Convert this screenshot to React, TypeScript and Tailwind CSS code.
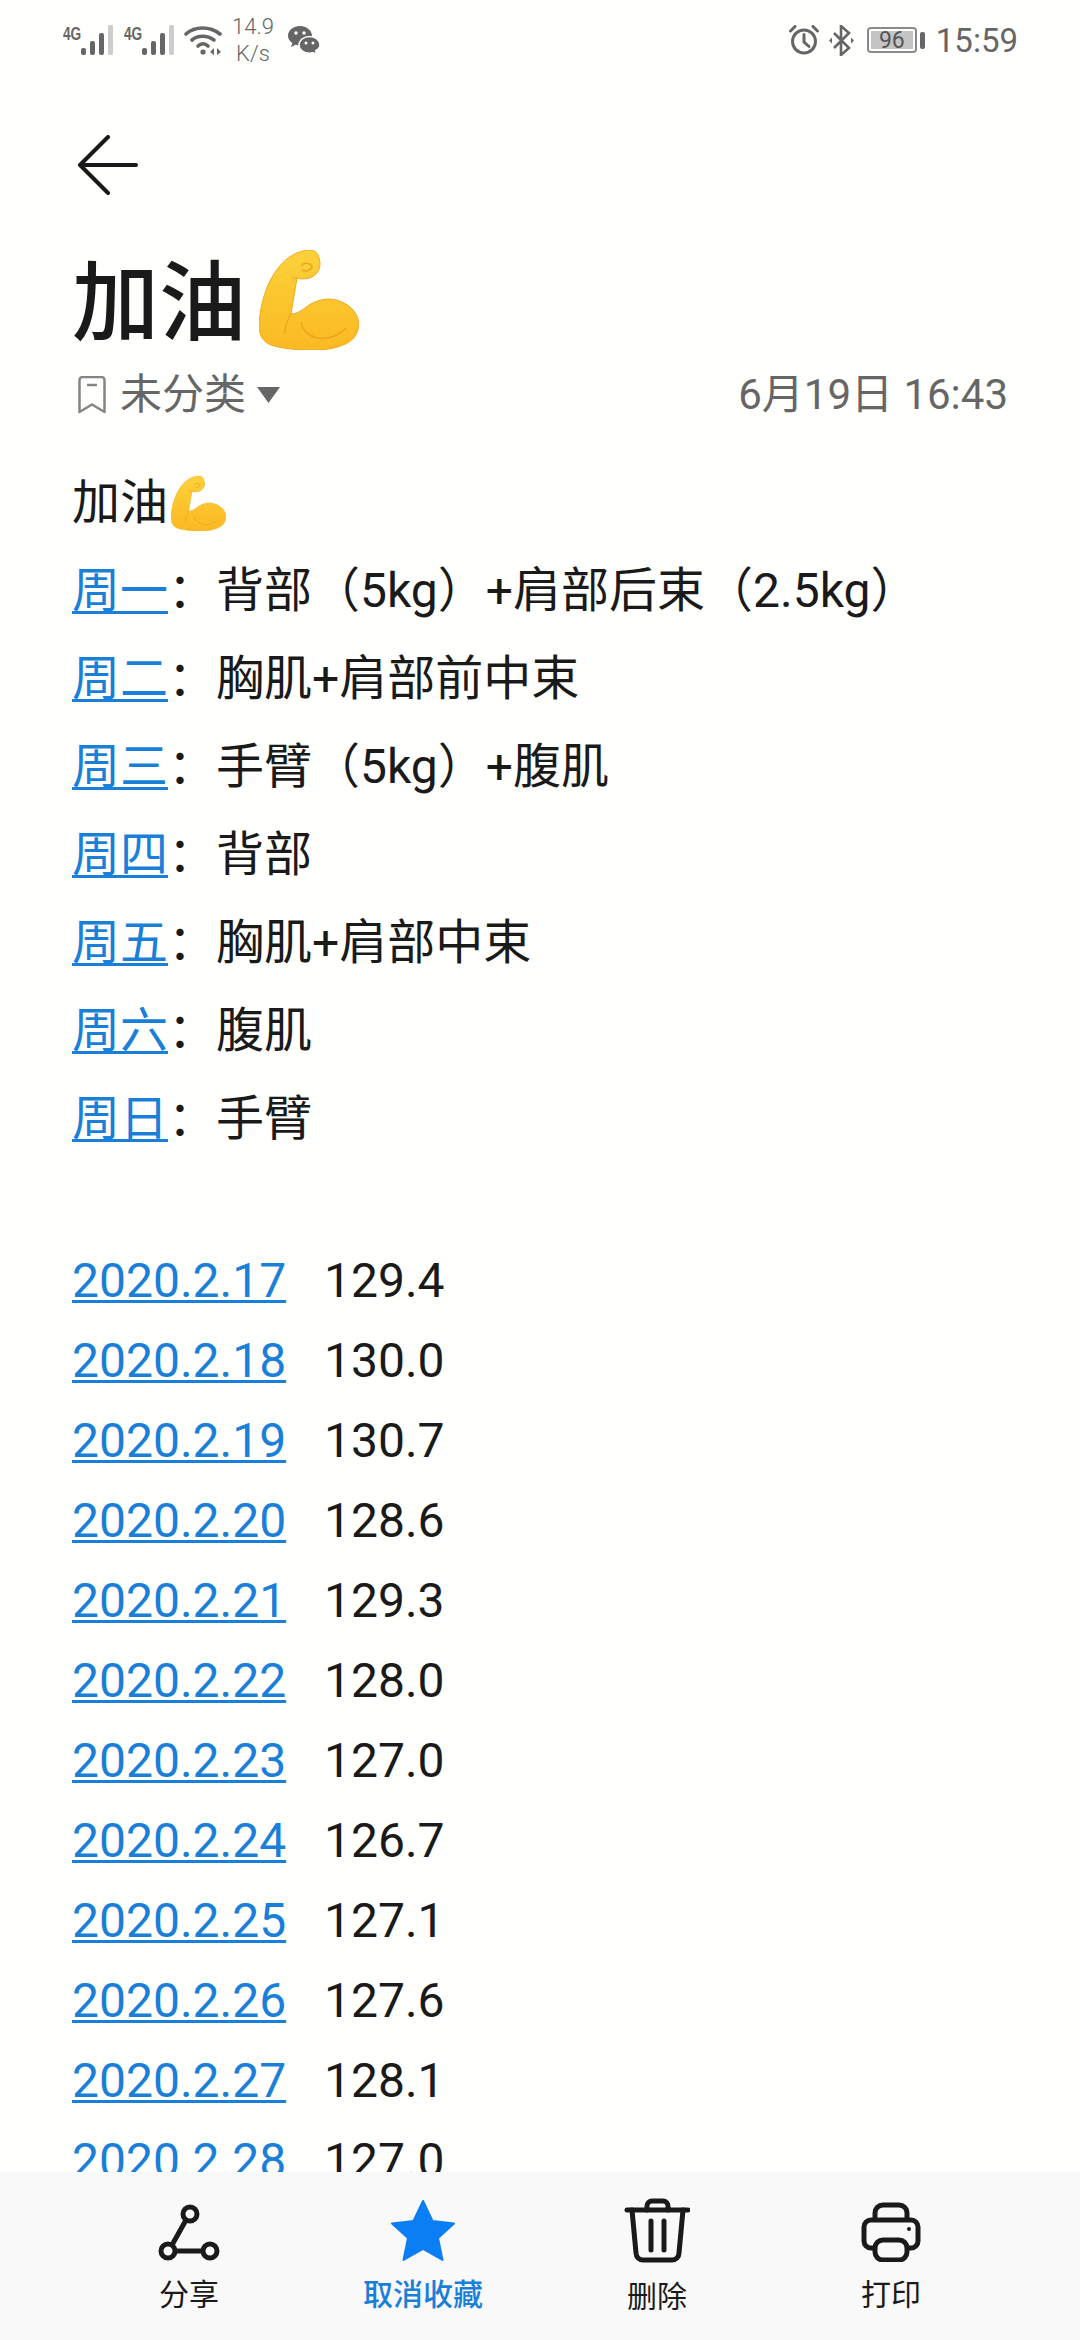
import React from 'react';

const week = [
  { day: '周一', plan: '背部（5kg）+肩部后束（2.5kg）' },
  { day: '周二', plan: '胸肌+肩部前中束' },
  { day: '周三', plan: '手臂（5kg）+腹肌' },
  { day: '周四', plan: '背部' },
  { day: '周五', plan: '胸肌+肩部中束' },
  { day: '周六', plan: '腹肌' },
  { day: '周日', plan: '手臂' },
];

const weights = [
  ['2020.2.17', '129.4'],
  ['2020.2.18', '130.0'],
  ['2020.2.19', '130.7'],
  ['2020.2.20', '128.6'],
  ['2020.2.21', '129.3'],
  ['2020.2.22', '128.0'],
  ['2020.2.23', '127.0'],
  ['2020.2.24', '126.7'],
  ['2020.2.25', '127.1'],
  ['2020.2.26', '127.6'],
  ['2020.2.27', '128.1'],
  ['2020.2.28', '127.0'],
];

const Signal = () => (
  <div className="flex items-start">
    <span className="text-[19px] leading-[17px] font-bold text-[#666] font-['Liberation_Sans'] w-[18px] scale-x-[0.72] origin-left">4G</span>
    <svg width="32" height="30" viewBox="0 0 32 30">
      <rect x="0" y="23" width="5" height="7" rx="2" fill="#666" />
      <rect x="9" y="16" width="5" height="14" rx="2" fill="#666" />
      <rect x="18" y="8" width="5" height="22" rx="2" fill="#666" />
      <rect x="27" y="0" width="5" height="30" rx="2" fill="#ccc" />
    </svg>
  </div>
);

const Wifi = () => (
  <svg width="38" height="30" viewBox="0 0 38 30" fill="none" stroke="#666" strokeWidth="3.6" strokeLinecap="round">
    <path d="M2 9C11 1 26 1 36 9" />
    <path d="M8 15C14 10 23 10 30 15" />
    <path d="M14 21C17 18 21 18 24 21" />
    <circle cx="19" cy="27" r="2.6" fill="#666" stroke="none" />
    <path d="M30 23l-4 4 4 3zM33 23l4 4-4 3z" fill="#666" stroke="none" />
  </svg>
);

const WeChat = () => (
  <svg width="32" height="28" viewBox="0 0 32 28">
    <path d="M12 0C5.400 0 0 4.300 0 9.800c0 3 1.700 5.500 4.300 7.300L3 21l4.600-2.300c1.400.4 2.900.7 4.400.7 6.600 0 12-4.300 12-9.600S18.600 0 12 0z" fill="#666" />
    <path d="M21.500 10.500c-5.800 0-10.500 3.800-10.500 8.400s4.700 8.400 10.500 8.400c1.200 0 2.400-.2 3.500-.5l3.700 1.200-1-3.300c2.600-1.500 4.300-3.500 4.300-5.800 0-4.600-4.700-8.400-10.500-8.400z" fill="#666" stroke="#fff" strokeWidth="1.500" />
    <circle cx="8" cy="7" r="1.700" fill="#fff" />
    <circle cx="16" cy="7" r="1.700" fill="#fff" />
    <circle cx="18" cy="17" r="1.500" fill="#fff" />
    <circle cx="25" cy="17" r="1.500" fill="#fff" />
  </svg>
);

const Alarm = () => (
  <svg width="30" height="30" viewBox="0 0 30 30" fill="none" stroke="#666" strokeWidth="3" strokeLinecap="round">
    <circle cx="15" cy="16.500" r="11.500" />
    <path d="M15 9.500v7.500l5 4.500" />
    <path d="M1.500 6L6 1.500M28.500 6L24 1.500" />
  </svg>
);

const Bluetooth = () => (
  <svg width="25" height="31" viewBox="0 0 25 31" fill="none" stroke="#666" strokeWidth="2.600">
    <path d="M5 8l15 15-8 7V1l8 7L5 23" />
    <path d="M0 15.500l3-3v6zM25 15.500l-3-3v6z" fill="#666" stroke="none" />
  </svg>
);

const Muscle = ({ size }: { size: number }) => (
  <svg width={size} height={size} viewBox="0 0 100 100" className="shrink-0">
    <defs>
      <linearGradient id="armFill" x1="0" y1="0" x2="0" y2="1">
        <stop offset="0" stopColor="#fcd13a" />
        <stop offset="1" stopColor="#fbb922" />
      </linearGradient>
    </defs>
    <path
      d="M0 76C1 52 9 30 20 17C28 7 38 1 50 0C56 0 59 3 60 8C62 14 61 20 57 24C52 29 44 30 38 28C36 40 34 52 32 64C37 64 42 61 46 58C53 52 62 49 71 49C84 50 96 58 99 69C101 78 98 87 90 92C80 98 68 100 54 100C40 100 24 99 12 95C4 92 0 85 0 76Z"
      fill="url(#armFill)"
      stroke="#f2a81d"
      strokeWidth="1"
    />
    <path d="M42 16C45 12 51 13 53 16C53 20 47 22 43 20" fill="none" stroke="#eaa41f" strokeWidth="1.500" />
    <path d="M32 64C28 70 26 76 26 84" fill="none" stroke="#eaa41f" strokeWidth="1.200" />
    <path d="M42 72C44 84 56 90 68 88C76 87 82 83 87 78" fill="none" stroke="#eaa41f" strokeWidth="1.500" />
    <path d="M33 26C34 30 35 28 38 28" fill="none" stroke="#eaa41f" strokeWidth="1" />
  </svg>
);

export default function App() {
  return (
    <div className="flex flex-col w-[1080px] h-[2340px] overflow-hidden bg-[#fffffd] text-[#1a1a1a] font-['Roboto','Noto_Sans_CJK_SC',sans-serif]">
      {/* status bar */}
      <div className="flex justify-between items-center h-[80px] pl-[63px] pr-[62px] text-[#666] shrink-0">
        <div className="flex items-center">
          <Signal />
          <div className="ml-[11px]"><Signal /></div>
          <div className="ml-[10px]"><Wifi /></div>
          <div className="ml-[10px] w-[42px] text-center text-[22px] leading-[27px] font-light">14.9<br />K/s</div>
          <div className="ml-[14px]"><WeChat /></div>
        </div>
        <div className="flex items-center">
          <Alarm />
          <div className="ml-[10px]"><Bluetooth /></div>
          <div className="ml-[13px] flex items-center">
            <div className="w-[50px] h-[26px] rounded-[4px] border-2 border-[#8a8a8a] p-[2px]">
              <div className="h-full bg-[#c4c4c4] flex items-center justify-center text-[23px] leading-none text-[#555]">96</div>
            </div>
            <div className="ml-[3px] w-[5px] h-[17px] rounded-[2px] bg-[#666]" />
          </div>
          <span className="ml-[11px] text-[33px] leading-none">15:59</span>
        </div>
      </div>

      {/* back arrow */}
      <div className="h-[170px] flex items-center pl-[78px] shrink-0">
        <svg width="60" height="60" viewBox="0 0 60 60" fill="none" stroke="#1a1a1a" strokeWidth="4" strokeLinecap="round" strokeLinejoin="round">
          <path d="M30 2L2 30l28 28" />
          <path d="M3 30h55" />
        </svg>
      </div>

      {/* title */}
      <div className="h-[100px] flex items-center pl-[72px] shrink-0">
        <span className="text-[87px] leading-none font-medium pt-[8px]">加油</span>
        <div className="ml-[13px]"><Muscle size={100} /></div>
      </div>

      {/* category and date */}
      <div className="h-[90px] flex items-center justify-between pl-[78px] pr-[72px] text-[#666] text-[42px] shrink-0">
        <div className="flex items-center">
          <svg width="28" height="38" viewBox="0 0 28 38" fill="none" stroke="#858585" strokeWidth="2.500" strokeLinejoin="round">
            <path d="M1.500 4a3 3 0 0 1 3-3h19a3 3 0 0 1 3 3v32L14 28.500 1.500 36z" />
            <path d="M9 9h10" />
          </svg>
          <span className="ml-[14px] leading-none">未分类</span>
          <svg width="23" height="16" viewBox="0 0 23 16" className="ml-[11px]">
            <path d="M0 0h23L11.500 16z" fill="#666" />
          </svg>
        </div>
        <span className="leading-none">6月19日 16:43</span>
      </div>

      {/* note body, cut off by the toolbar */}
      <div className="flex-1 min-h-0 overflow-hidden pl-[72px] pt-[19px] text-[48px]">
        <div className="h-[88px] flex items-center">
          <span>加油</span>
          <div className="ml-[3px]"><Muscle size={55} /></div>
        </div>
        {week.map((row) => (
          <div key={row.day} className="h-[88px] flex items-center whitespace-pre">
            <span className="text-[#1a7fd8] underline underline-offset-[4px] decoration-[3px]">{row.day}</span>
            <span>：{row.plan}</span>
          </div>
        ))}
        <div className="h-[78px]" />
        {weights.map(([date, value]) => (
          <div key={date} className="h-[80px] flex items-center">
            <span className="w-[252px] text-[#1a7fd8]"><span className="underline underline-offset-[3px] decoration-[3px]">{date}</span></span>
            <span>{value}</span>
          </div>
        ))}
      </div>

      {/* bottom toolbar */}
      <div className="grid grid-cols-4 h-[168px] px-[72px] bg-[#f9f9fa] text-[30px] shrink-0">
        <div className="flex flex-col items-center pt-[32px]">
          <svg width="62" height="58" viewBox="0 0 62 58" fill="none" stroke="#1a1a1a" strokeWidth="5">
            <circle cx="32" cy="10" r="7" />
            <circle cx="10" cy="47" r="7" />
            <circle cx="52" cy="47" r="7" />
            <path d="M28 16L14 41M17 47h28" />
          </svg>
          <span className="mt-[18px] leading-none">分享</span>
        </div>
        <div className="flex flex-col items-center pt-[28px] text-[#1a7fd8]">
          <svg width="66" height="62" viewBox="0 0 66 62">
            <path d="M33 1l9.500 20 21.500 2.500-16 14.500 4.500 22L33 49 13.500 60 18 38 2 23.500 23.500 21z" fill="#0a7ef5" stroke="#0a7ef5" strokeWidth="2" strokeLinejoin="round" />
          </svg>
          <span className="mt-[18px] leading-none font-medium">取消收藏</span>
        </div>
        <div className="flex flex-col items-center pt-[26px]">
          <svg width="66" height="66" viewBox="0 0 66 66" fill="none" stroke="#1a1a1a" strokeWidth="5" strokeLinecap="round" strokeLinejoin="round">
            <path d="M3 12h61" />
            <path d="M8 12l4 43a7 7 0 0 0 7 7h29a7 7 0 0 0 7-7l4-43" />
            <path d="M23 12V8a5 5 0 0 1 5-5h11a5 5 0 0 1 5 5v4" />
            <path d="M27 23v29M40 23v29" />
          </svg>
          <span className="mt-[18px] leading-none">删除</span>
        </div>
        <div className="flex flex-col items-center pt-[30px]">
          <svg width="60" height="60" viewBox="0 0 60 60" fill="none" stroke="#1a1a1a" strokeWidth="5">
            <path d="M14 18V11a8 8 0 0 1 8-8h16a8 8 0 0 1 8 8v7" />
            <path d="M14 46H10a7 7 0 0 1-7-7V25a7 7 0 0 1 7-7h40a7 7 0 0 1 7 7v14a7 7 0 0 1-7 7h-4" />
            <rect x="14" y="38" width="32" height="20" rx="8" />
            <circle cx="48" cy="27" r="2" fill="#1a1a1a" stroke="none" />
          </svg>
          <span className="mt-[18px] leading-none">打印</span>
        </div>
      </div>
    </div>
  );
}
